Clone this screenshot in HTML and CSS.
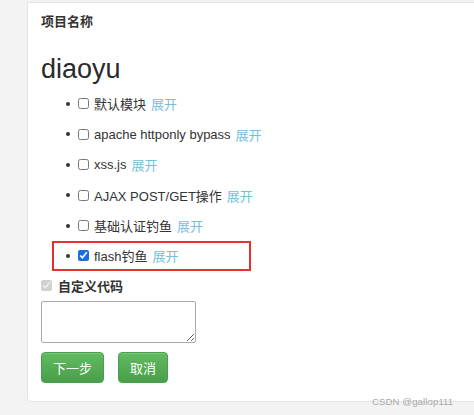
FILE: index.html
```html
<!DOCTYPE html>
<html lang="zh">
<head>
<meta charset="utf-8">
<title>项目名称</title>
<link rel="stylesheet" href="styles.css">
</head>
<body>
<div class="card">
  <div class="label">项目名称</div>
  <h1 class="name">diaoyu</h1>
  <ul class="modules">
    <li class="row"><span class="dot"></span><input type="checkbox"><span>默认模块</span><a class="more">展开</a></li>
    <li class="row"><span class="dot"></span><input type="checkbox"><span>apache httponly bypass</span><a class="more">展开</a></li>
    <li class="row"><span class="dot"></span><input type="checkbox"><span>xss.js</span><a class="more">展开</a></li>
    <li class="row"><span class="dot"></span><input type="checkbox"><span>AJAX POST/GET操作</span><a class="more">展开</a></li>
    <li class="row"><span class="dot"></span><input type="checkbox"><span>基础认证钓鱼</span><a class="more">展开</a></li>
    <li class="row highlight"><span class="dot"></span><input type="checkbox" checked><span>flash钓鱼</span><a class="more">展开</a></li>
  </ul>
  <div class="custom"><input type="checkbox" checked disabled><span>自定义代码</span></div>
  <textarea class="code"></textarea>
  <div class="actions">
    <button class="btn">下一步</button>
    <button class="btn">取消</button>
  </div>
</div>
<div class="watermark">CSDN @gallop111</div>
</body>
</html>
```
FILE: styles.css
```css
html, body {
  margin: 0;
  padding: 0;
}
body {
  width: 474px;
  height: 415px;
  overflow: hidden;
  position: relative;
  background: #f3f3f3;
  font-family: "Liberation Sans", "Noto Sans CJK SC", sans-serif;
  color: #333;
  font-size: 13px;
}
.card {
  box-sizing: border-box;
  margin: 2px 0 0 27px;
  width: 470px;
  height: 400px;
  background: #fff;
  border: 1px solid #e4e4e4;
  border-radius: 0 0 0 4px;
  padding: 10px 0 0 13px;
}
.label {
  font-size: 13px;
  font-weight: bold;
  line-height: 18px;
  height: 18px;
}
.name {
  margin: 23px 0 0;
  font-size: 27px;
  font-weight: normal;
  line-height: 31px;
  height: 31px;
  color: #2b2b2b;
}
.modules {
  margin: 3.8px 0 0;
  padding: 0;
  list-style: none;
}
.row {
  position: relative;
  display: flex;
  align-items: center;
  height: 30.4px;
  padding-left: 25px;
  white-space: nowrap;
}
.dot {
  width: 4px;
  height: 4px;
  border-radius: 50%;
  background: #333;
  margin-right: 8px;
}
.row input {
  margin: 0 5px 0 0;
  width: 11px;
  height: 11px;
  accent-color: #1a6fe0;
}
.more {
  margin-left: 5px;
  color: #72c0dc;
}
.highlight::after {
  content: "";
  position: absolute;
  left: 11px;
  top: 0;
  bottom: 0;
  width: 199px;
  border: 2px solid #e5322f;
  box-sizing: border-box;
}
.custom {
  display: flex;
  align-items: center;
  margin-top: 5px;
  height: 19px;
  font-weight: bold;
}
.custom input {
  margin: 0 6px 0 0;
  width: 11px;
  height: 11px;
}
.code {
  display: block;
  box-sizing: border-box;
  margin: 6px 0 0;
  width: 155px;
  height: 42px;
  border: 1px solid #a9a9a9;
  border-radius: 2px;
}
.actions {
  display: flex;
  gap: 15px;
  margin-top: 9px;
}
.btn {
  height: 31px;
  padding: 0 11px;
  border: 1px solid #4a9f4a;
  border-radius: 4px;
  background: linear-gradient(#62bb62, #479f47);
  color: #fff;
  font-family: "Liberation Sans", "Noto Sans CJK SC", sans-serif;
  font-size: 13px;
  box-shadow: inset 0 1px 0 rgba(255,255,255,0.15);
}
.btn + .btn {
  margin-left: -1px;
}
.watermark {
  position: absolute;
  left: 372px;
  top: 396px;
  font-size: 9.6px;
  color: #a8a8a8;
  letter-spacing: 0.1px;
}
```
